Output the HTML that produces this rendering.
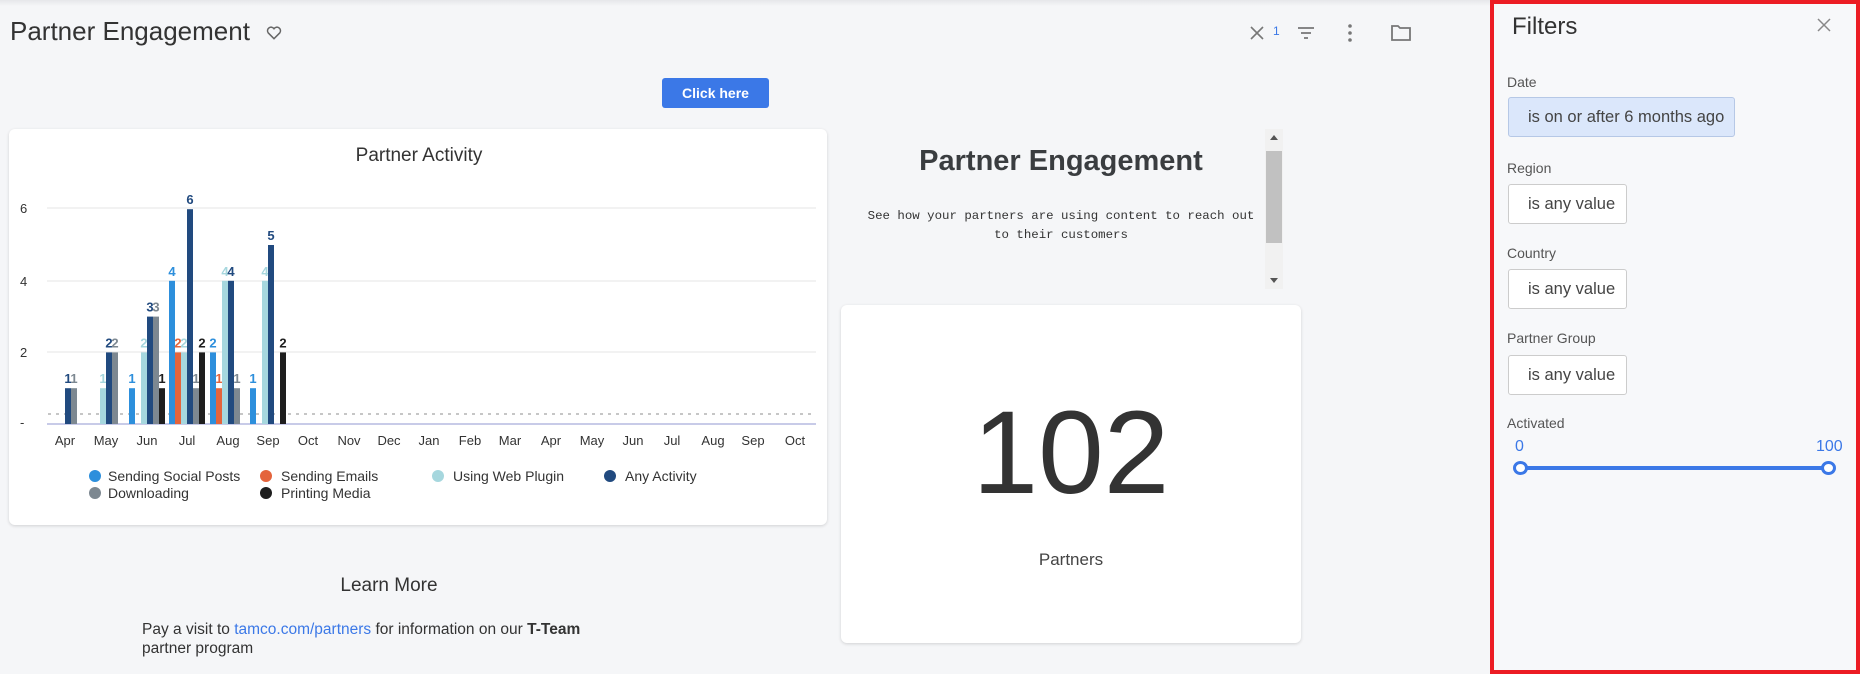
<!DOCTYPE html>
<html><head><meta charset="utf-8"><style>
*{box-sizing:border-box;margin:0;padding:0}
body{width:1860px;height:674px;overflow:hidden;background:#f5f6f8;font-family:"Liberation Sans",sans-serif;position:relative;color:#3c4043}
.abs{position:absolute}
.card{position:absolute;background:#fff;border-radius:6px;box-shadow:0 1px 3px rgba(0,0,0,.15)}
.flbl{position:absolute;left:1507px;font-size:14px;color:#555}
.fbox{position:absolute;left:1508px;height:40px;border:1px solid #ccc;border-radius:3px;background:#fff;font-size:16.5px;color:#444;padding-left:19px;line-height:38px}
</style></head><body>
<div class="abs" style="left:0;top:0;width:1490px;height:6px;background:linear-gradient(#e6e7ea,#f5f6f8)"></div>
<div class="abs" style="left:10px;top:16px;font-size:26px;color:#333">Partner Engagement</div>
<svg class="abs" style="left:264px;top:22px" width="20" height="20" viewBox="0 0 24 24"><path d="M12 20l-7-7a4.2 4.2 0 0 1 7-5 4.2 4.2 0 0 1 7 5z" fill="none" stroke="#666" stroke-width="1.8"/></svg>
<svg class="abs" style="left:1249px;top:25px" width="16" height="16"><path d="M2 2L14 14M14 2L2 14" stroke="#777" stroke-width="1.6"/></svg>
<div class="abs" style="left:1273px;top:24px;font-size:12px;color:#3b78e7">1</div>
<svg class="abs" style="left:1296px;top:24px" width="20" height="18"><path d="M2 4H18M5 9H15M8 14H12" stroke="#777" stroke-width="1.8"/></svg>
<svg class="abs" style="left:1346px;top:23px" width="8" height="20"><circle cx="4" cy="3" r="1.8" fill="#777"/><circle cx="4" cy="10" r="1.8" fill="#777"/><circle cx="4" cy="17" r="1.8" fill="#777"/></svg>
<svg class="abs" style="left:1390px;top:23px" width="22" height="20"><path d="M2 3H8L10 5H20V17H2Z" fill="none" stroke="#777" stroke-width="1.8"/></svg>
<div class="abs" style="left:662px;top:78px;width:107px;height:30px;background:#3b78e7;border-radius:3px;color:#fff;font-weight:bold;font-size:14px;text-align:center;line-height:30px">Click here</div>

<div class="card" style="left:9px;top:129px;width:818px;height:396px"></div>
<svg class="abs" style="left:0;top:129px" width="830" height="400" font-family="Liberation Sans, sans-serif">
<text x="419" y="32" font-size="19" fill="#333" text-anchor="middle">Partner Activity</text>
<g stroke="#e6e6e6"><line x1="47" x2="816" y1="79" y2="79"/><line x1="47" x2="816" y1="152" y2="152"/><line x1="47" x2="816" y1="223" y2="223"/></g>
<line x1="47" x2="816" y1="295" y2="295" stroke="#c8cbe8" stroke-width="2"/>
<g font-size="13" fill="#333"><text x="20" y="84">6</text><text x="20" y="157">4</text><text x="20" y="228">2</text><text x="20" y="298">-</text></g>
<line x1="48" x2="816" y1="285" y2="285" stroke="#444" stroke-width="1" stroke-dasharray="3,5" opacity=".6"/>
<g font-size="13" fill="#333" text-anchor="middle">
<text x="65" y="316">Apr</text><text x="106" y="316">May</text><text x="147" y="316">Jun</text><text x="187" y="316">Jul</text><text x="228" y="316">Aug</text><text x="268" y="316">Sep</text><text x="308" y="316">Oct</text><text x="349" y="316">Nov</text><text x="389" y="316">Dec</text><text x="429" y="316">Jan</text><text x="470" y="316">Feb</text><text x="510" y="316">Mar</text><text x="551" y="316">Apr</text><text x="592" y="316">May</text><text x="633" y="316">Jun</text><text x="672" y="316">Jul</text><text x="713" y="316">Aug</text><text x="753" y="316">Sep</text><text x="795" y="316">Oct</text></g>
<g id="bars" font-size="13" font-weight="bold" text-anchor="middle"></g>
<g font-size="14" fill="#333">
<circle cx="95" cy="347" r="6" fill="#2d8fdc"/><text x="108" y="352">Sending Social Posts</text>
<circle cx="266" cy="347" r="6" fill="#e4643c"/><text x="281" y="352">Sending Emails</text>
<circle cx="438" cy="347" r="6" fill="#a6d7de"/><text x="453" y="352">Using Web Plugin</text>
<circle cx="610" cy="347" r="6" fill="#214a7f"/><text x="625" y="352">Any Activity</text>
<circle cx="95" cy="364" r="6" fill="#7d8891"/><text x="108" y="369">Downloading</text>
<circle cx="266" cy="364" r="6" fill="#1e1e1e"/><text x="281" y="369">Printing Media</text></g>
</svg>

<div class="abs" style="left:861px;top:145px;width:400px;text-align:center;font-size:29px;font-weight:bold;color:#3a3d40">Partner Engagement</div>
<div class="abs" style="left:831px;top:207px;width:460px;text-align:center;white-space:nowrap;font-family:'Liberation Mono',monospace;font-size:12.4px;line-height:19px;color:#333">See how your partners are using content to reach out<br>to their customers</div>
<div class="abs" style="left:1265px;top:129px;width:18px;height:160px;background:#f1f1f1"></div>
<div class="abs" style="left:1266px;top:151px;width:16px;height:92px;background:#c1c1c1"></div>
<div class="abs" style="left:1270px;top:135px;border:4px solid transparent;border-bottom:5px solid #555;border-top:0"></div>
<div class="abs" style="left:1270px;top:278px;border:4px solid transparent;border-top:5px solid #555;border-bottom:0"></div>

<div class="card" style="left:841px;top:305px;width:460px;height:338px"></div>
<div class="abs" style="left:841px;top:388px;width:460px;text-align:center;font-size:118px;font-weight:300;color:#333;line-height:130px">102</div>
<div class="abs" style="left:841px;top:550px;width:460px;text-align:center;font-size:17px;color:#444">Partners</div>

<div class="abs" style="left:289px;top:575px;width:200px;text-align:center;font-size:19px;color:#333">Learn More</div>
<div class="abs" style="left:142px;top:620px;font-size:15.5px;line-height:19px;color:#333">Pay a visit to <span style="color:#3b78e7">tamco.com/partners</span> for information on our <b>T-Team</b><br>partner program</div>

<div class="abs" style="left:1490px;top:0;width:370px;height:674px;background:#f7f8fa;border:4px solid #ec1c24"></div>
<div class="abs" style="left:1512px;top:13px;font-size:24px;color:#333">Filters</div>
<svg class="abs" style="left:1817px;top:18px" width="14" height="14"><path d="M1 1L13 13M13 1L1 13" stroke="#888" stroke-width="1.5"/></svg>
<div class="flbl" style="top:74px">Date</div>
<div class="fbox" style="top:97px;width:227px;background:#dbe7fb;border-color:#b6c8e6">is on or after 6 months ago</div>
<div class="flbl" style="top:160px">Region</div>
<div class="fbox" style="top:184px;width:119px">is any value</div>
<div class="flbl" style="top:245px">Country</div>
<div class="fbox" style="top:269px;width:119px">is any value</div>
<div class="flbl" style="top:330px">Partner Group</div>
<div class="fbox" style="top:355px;width:119px">is any value</div>
<div class="flbl" style="top:415px">Activated</div>
<div class="abs" style="left:1515px;top:438px;font-size:16px;color:#3b78e7">0</div>
<div class="abs" style="left:1816px;top:438px;font-size:16px;color:#3b78e7">100</div>
<div class="abs" style="left:1520px;top:466px;width:310px;height:4px;background:#3b78e7"></div>
<div class="abs" style="left:1513px;top:461px;width:15px;height:14px;border:3px solid #3b78e7;border-radius:50%;background:#fff"></div>
<div class="abs" style="left:1821px;top:461px;width:15px;height:14px;border:3px solid #3b78e7;border-radius:50%;background:#fff"></div>

<script>
var cols=["#2d8fdc","#e4643c","#a6d7de","#214a7f","#7d8891","#1e1e1e"];
var data={65:[0,0,0,1,1,0],106:[0,0,1,2,2,0],147:[1,0,2,3,3,1],187:[4,2,2,6,1,2],228:[2,1,4,4,1,0],268:[1,0,4,5,0,2]};
var g=document.getElementById('bars'),s="";
for(var c in data){var v=data[c];for(var i=0;i<6;i++){if(!v[i])continue;var x=+c-18+i*6,h=v[i]*35.8,y=295-h;
s+='<rect x="'+x+'" y="'+y+'" width="6" height="'+h+'" fill="'+cols[i]+'"/>';
s+='<text x="'+(x+3)+'" y="'+(y-5)+'" fill="'+cols[i]+'">'+v[i]+'</text>';}}
g.innerHTML=s;
</script>
</body></html>
